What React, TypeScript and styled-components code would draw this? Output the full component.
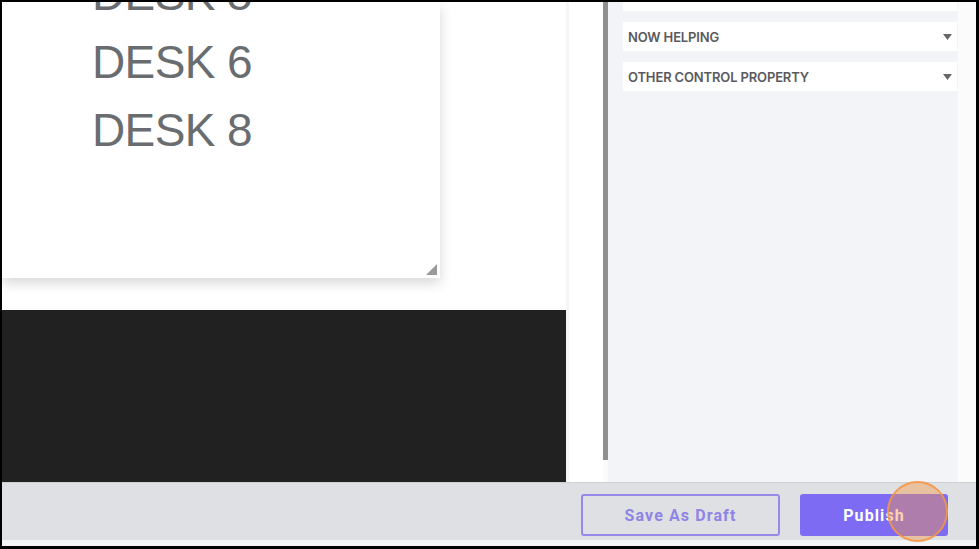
import React from "react";
import styled, { createGlobalStyle } from "styled-components";

const GlobalStyle = createGlobalStyle`
  html, body {
    margin: 0;
    padding: 0;
    background: #000;
  }
  * {
    box-sizing: border-box;
  }
`;

const Frame = styled.div`
  width: 979px;
  height: 549px;
  background: #000;
  padding: 2px 3px 3px 2px;
  overflow: hidden;
`;

const Screen = styled.div`
  position: relative;
  width: 974px;
  height: 544px;
  display: flex;
  flex-direction: column;
  background: #fff;
  overflow: hidden;
  font-family: "Liberation Sans", Arial, sans-serif;
`;

const Main = styled.div`
  display: flex;
  height: 480px;
`;

const Canvas = styled.div`
  width: 564px;
  display: flex;
  flex-direction: column;
  background: #fff;
`;

const CardArea = styled.div`
  height: 308px;
  background: #fff;
`;

const Card = styled.div`
  position: relative;
  width: 438px;
  height: 276px;
  background: #fff;
  box-shadow: 0 5px 12px rgba(0, 0, 0, 0.16);
  overflow: hidden;
`;

const DeskList = styled.div`
  margin-top: -42px;
  padding-left: 90px;
  display: flex;
  flex-direction: column;
`;

const Desk = styled.div`
  font-size: 46px;
  line-height: 68px;
  color: #6a6d70;
  letter-spacing: -0.6px;
`;

const ResizeHandle = styled.svg`
  position: absolute;
  right: 3px;
  bottom: 3px;
`;

const Stage = styled.div`
  flex: 1;
  background: #212121;
`;

const Gutter = styled.div`
  width: 37px;
  background: #fff;
  border-left: 3px solid #f6f6f6;
`;

const Track = styled.div`
  width: 5px;
  background: #fbfbfb;
`;

const Thumb = styled.div`
  height: 458px;
  background: #8f8f8f;
`;

const Panel = styled.div`
  width: 350px;
  background: #f3f4f8;
  padding: 0 1px 0 15px;
`;

const FieldList = styled.div`
  margin-top: -20px;
  display: flex;
  flex-direction: column;
  gap: 11px;
`;

const Field = styled.div`
  height: 29px;
  background: #fff;
  display: flex;
  align-items: center;
  justify-content: space-between;
  padding: 0 5px 0 5px;
  font-family: Inter, "Noto Sans", sans-serif;
  font-weight: 600;
  font-size: 13px;
  letter-spacing: -0.15px;
  color: #5a5a5e;
`;

const Caret = styled.svg`
  flex: none;
`;

const Margin = styled.div`
  flex: 1;
  background: #fbfbfc;
`;

const Footer = styled.div`
  height: 58px;
  background: #dfe0e4;
  border-top: 1px solid #cfd0d3;
  display: flex;
  justify-content: flex-end;
  align-items: flex-start;
  gap: 20px;
  padding: 11px 28px 0 0;
`;

const Strip = styled.div`
  flex: 1;
  background: #f3f4f8;
`;

const Button = styled.button<{ $primary?: boolean }>`
  height: 42px;
  width: ${(p) => (p.$primary ? "148px" : "199px")};
  border-radius: 3px;
  border: 2px solid ${(p) => (p.$primary ? "#7d6bf4" : "#958aea")};
  background: ${(p) => (p.$primary ? "#7d6bf4" : "transparent")};
  color: ${(p) => (p.$primary ? "#fff" : "#8e84e4")};
  font-family: Roboto, "Liberation Sans", sans-serif;
  font-weight: 700;
  font-size: 16px;
  letter-spacing: 1.1px;
  cursor: pointer;
`;

const ClickMark = styled.div`
  position: absolute;
  left: 885px;
  top: 479px;
  width: 61px;
  height: 61px;
  border-radius: 50%;
  background: rgba(246, 150, 70, 0.42);
  border: 2px solid rgba(243, 150, 72, 0.85);
  pointer-events: none;
`;

const fields = ["NOW SERVING", "NOW HELPING", "OTHER CONTROL PROPERTY"];
const desks = ["DESK 5", "DESK 6", "DESK 8"];

const App = () => {
  return (
    <Frame>
      <GlobalStyle />
      <Screen>
        <Main>
          <Canvas>
            <CardArea>
              <Card>
                <DeskList>
                  {desks.map((d) => (
                    <Desk key={d}>{d}</Desk>
                  ))}
                </DeskList>
                <ResizeHandle width="11" height="11" viewBox="0 0 11 11">
                  <polygon points="11,0 11,11 0,11" fill="#9a9a9a" />
                </ResizeHandle>
              </Card>
            </CardArea>
            <Stage />
          </Canvas>
          <Gutter />
          <Track>
            <Thumb />
          </Track>
          <Panel>
            <FieldList>
              {fields.map((f) => (
                <Field key={f}>
                  <span>{f}</span>
                  <Caret width="9" height="6" viewBox="0 0 9 6">
                    <polygon points="0,0 9,0 4.5,6" fill="#666" />
                  </Caret>
                </Field>
              ))}
            </FieldList>
          </Panel>
          <Margin />
        </Main>
        <Footer>
          <Button>Save As Draft</Button>
          <Button $primary>Publish</Button>
        </Footer>
        <Strip />
        <ClickMark />
      </Screen>
    </Frame>
  );
};

export default App;
